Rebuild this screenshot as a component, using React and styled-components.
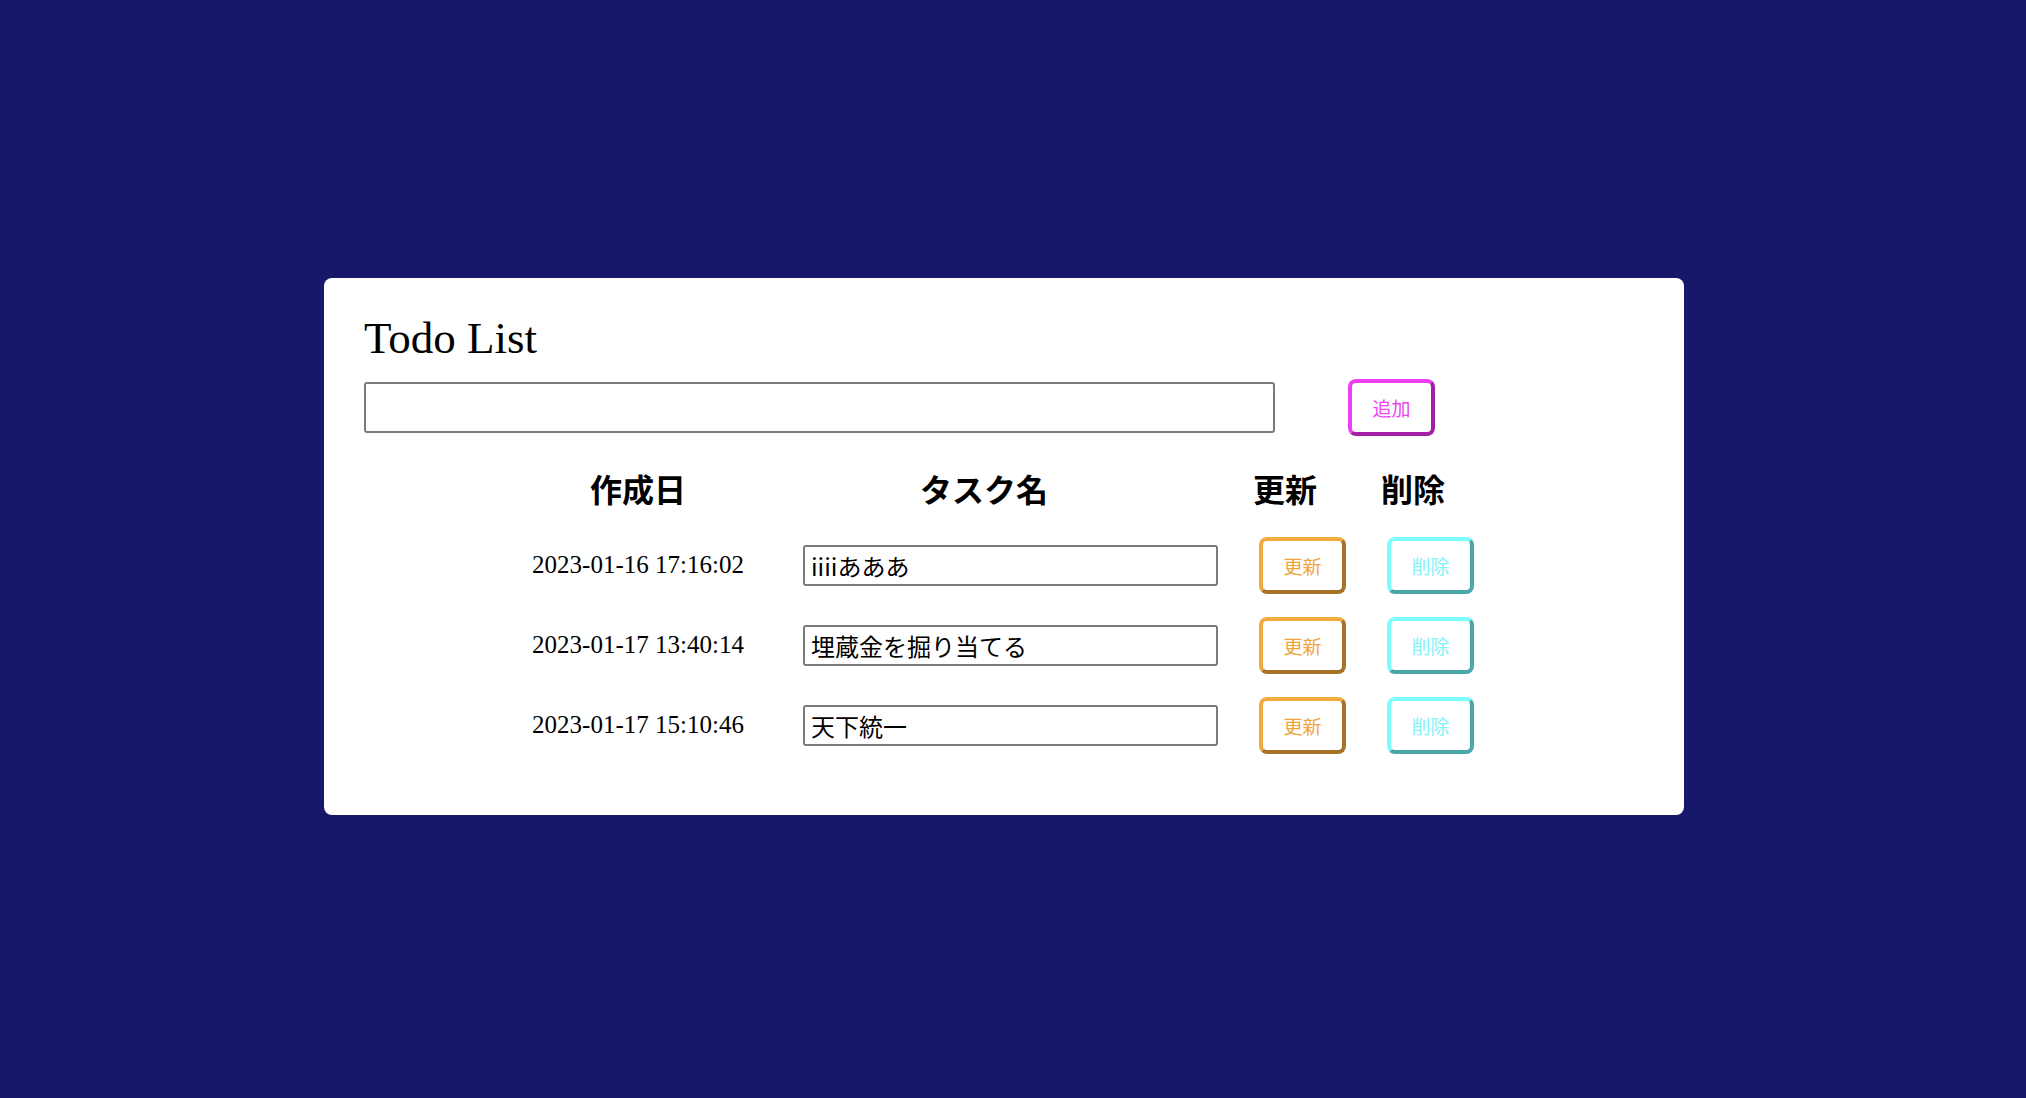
import React from "react";
import styled, { createGlobalStyle } from "styled-components";

const GlobalStyle = createGlobalStyle`
  html, body {
    margin: 0;
    padding: 0;
    background: #18186a;
  }
  #root {
    min-height: 100vh;
  }
`;

const Page = styled.div`
  min-height: 100vh;
  display: flex;
  align-items: center;
  justify-content: center;
  padding-right: 18px;
  padding-bottom: 5px;
  box-sizing: border-box;
`;

const Card = styled.div`
  width: 1360px;
  box-sizing: border-box;
  background: #ffffff;
  border-radius: 8px;
  padding: 34px 40px 50px;
`;

const Title = styled.h1`
  margin: 0;
  font-family: "Liberation Serif", "DejaVu Serif", serif;
  font-weight: normal;
  font-size: 45px;
  line-height: 53px;
  color: #000000;
`;

const AddRow = styled.div`
  display: flex;
  align-items: center;
  gap: 73px;
  margin-top: 14px;
  height: 57px;
`;

const TextInput = styled.input`
  box-sizing: border-box;
  width: ${(p) => p.$width}px;
  height: ${(p) => p.$height}px;
  border: 2px solid #7b7b7b;
  border-radius: 3px;
  padding: 0 6px;
  font-family: "Noto Sans CJK JP", "Noto Sans", sans-serif;
  font-size: 24px;
  color: #000000;
  background: #ffffff;
  outline: none;
`;

const ColorButton = styled.button`
  box-sizing: border-box;
  width: 87px;
  height: 57px;
  padding: 0;
  background: #ffffff;
  border-width: 4px;
  border-style: solid;
  border-radius: 8px;
  border-top-color: ${(p) => p.$light};
  border-left-color: ${(p) => p.$light};
  border-bottom-color: ${(p) => p.$dark};
  border-right-color: ${(p) => p.$dark};
  color: ${(p) => p.$text};
  font-family: "Noto Sans CJK JP", "Noto Sans", sans-serif;
  font-size: 19px;
  font-weight: 400;
  cursor: pointer;
`;

const Table = styled.div`
  width: 948px;
  margin: 27px 0 0 165px;
  display: grid;
  grid-template-columns: 218px 474px 128px 128px;
`;

const HeadCell = styled.div`
  height: 50px;
  margin-bottom: 12px;
  display: flex;
  align-items: center;
  justify-content: center;
  font-family: "Noto Sans CJK JP", "Noto Sans", sans-serif;
  font-weight: 700;
  font-size: 32px;
  color: #000000;
`;

const Cell = styled.div`
  height: 80px;
  display: flex;
  align-items: center;
  justify-content: ${(p) => (p.$end ? "flex-end" : "center")};
  padding-right: ${(p) => (p.$end ? "3px" : "0")};
`;

const DateText = styled.span`
  font-family: "Liberation Serif", "DejaVu Serif", serif;
  font-size: 25px;
  color: #000000;
  white-space: nowrap;
`;

const todos = [
  { date: "2023-01-16 17:16:02", name: "iiiiあああ" },
  { date: "2023-01-17 13:40:14", name: "埋蔵金を掘り当てる" },
  { date: "2023-01-17 15:10:46", name: "天下統一" },
];

export default function App() {
  return (
    <>
      <GlobalStyle />
      <Page>
        <Card>
          <Title>Todo List</Title>
          <AddRow>
            <TextInput $width={911} $height={51} defaultValue="" />
            <ColorButton $light="#ef3ff5" $dark="#a31fa8" $text="#ee44f0">
              追加
            </ColorButton>
          </AddRow>
          <Table>
            <HeadCell>作成日</HeadCell>
            <HeadCell>タスク名</HeadCell>
            <HeadCell>更新</HeadCell>
            <HeadCell>削除</HeadCell>
            {todos.map((todo) => (
              <React.Fragment key={todo.date}>
                <Cell>
                  <DateText>{todo.date}</DateText>
                </Cell>
                <Cell $end>
                  <TextInput $width={415} $height={41} defaultValue={todo.name} />
                </Cell>
                <Cell $end>
                  <ColorButton $light="#f3a93b" $dark="#a87226" $text="#f0a53c">
                    更新
                  </ColorButton>
                </Cell>
                <Cell $end>
                  <ColorButton $light="#7dfdfd" $dark="#4aa8a8" $text="#80f4f8">
                    削除
                  </ColorButton>
                </Cell>
              </React.Fragment>
            ))}
          </Table>
        </Card>
      </Page>
    </>
  );
}
